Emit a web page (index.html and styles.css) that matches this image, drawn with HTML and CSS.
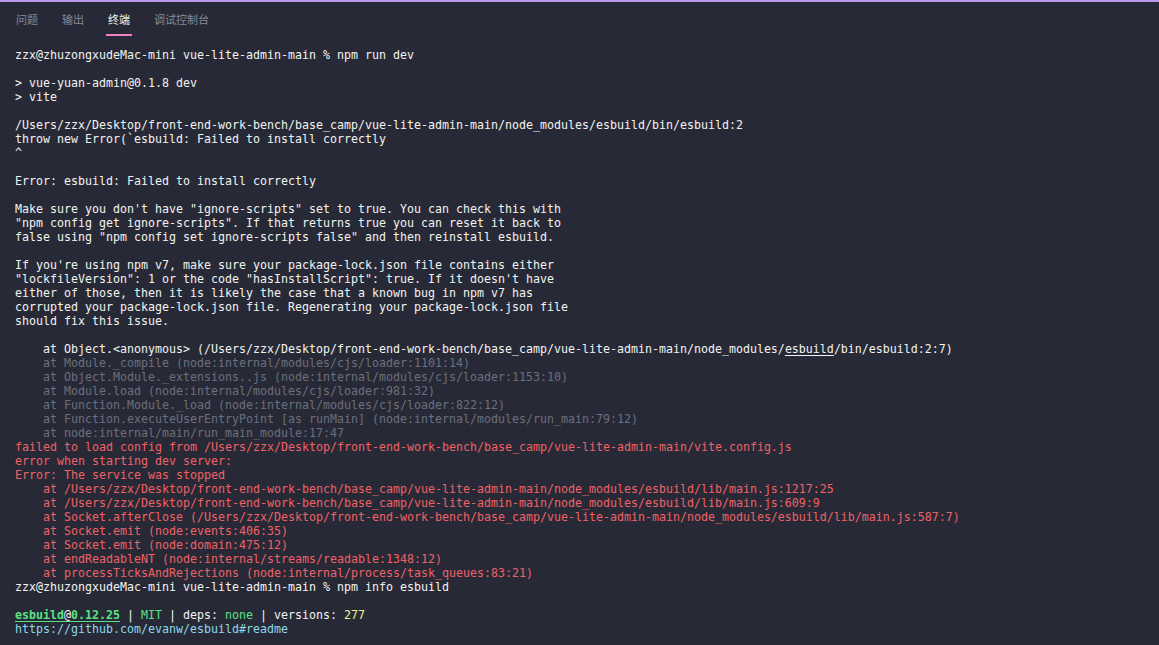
FILE: index.html
```html
<!DOCTYPE html>
<html lang="zh">
<head>
<meta charset="utf-8">
<title>终端</title>
<link rel="stylesheet" href="styles.css">
</head>
<body>
<div class="panel">
  <div class="tabs">
    <div class="tab">问题</div>
    <div class="tab">输出</div>
    <div class="tab active">终端</div>
    <div class="tab">调试控制台</div>
  </div>
  <pre class="term"><span>zzx@zhuzongxudeMac-mini vue-lite-admin-main % npm run dev</span>

<span>&gt; vue-yuan-admin@0.1.8 dev</span>
<span>&gt; vite</span>

<span>/Users/zzx/Desktop/front-end-work-bench/base_camp/vue-lite-admin-main/node_modules/esbuild/bin/esbuild:2</span>
<span>throw new Error(`esbuild: Failed to install correctly</span>
<span>^</span>

<span>Error: esbuild: Failed to install correctly</span>

<span>Make sure you don't have "ignore-scripts" set to true. You can check this with</span>
<span>"npm config get ignore-scripts". If that returns true you can reset it back to</span>
<span>false using "npm config set ignore-scripts false" and then reinstall esbuild.</span>

<span>If you're using npm v7, make sure your package-lock.json file contains either</span>
<span>"lockfileVersion": 1 or the code "hasInstallScript": true. If it doesn't have</span>
<span>either of those, then it is likely the case that a known bug in npm v7 has</span>
<span>corrupted your package-lock.json file. Regenerating your package-lock.json file</span>
<span>should fix this issue.</span>

<span>    at Object.&lt;anonymous&gt; (/Users/zzx/Desktop/front-end-work-bench/base_camp/vue-lite-admin-main/node_modules/<u>esbuild</u>/bin/esbuild:2:7)</span>
<span class="dim">    at Module._compile (node:internal/modules/cjs/loader:1101:14)</span>
<span class="dim">    at Object.Module._extensions..js (node:internal/modules/cjs/loader:1153:10)</span>
<span class="dim">    at Module.load (node:internal/modules/cjs/loader:981:32)</span>
<span class="dim">    at Function.Module._load (node:internal/modules/cjs/loader:822:12)</span>
<span class="dim">    at Function.executeUserEntryPoint [as runMain] (node:internal/modules/run_main:79:12)</span>
<span class="dim">    at node:internal/main/run_main_module:17:47</span>
<span class="red">failed to load config from /Users/zzx/Desktop/front-end-work-bench/base_camp/vue-lite-admin-main/vite.config.js</span>
<span class="red">error when starting dev server:</span>
<span class="red">Error: The service was stopped</span>
<span class="red">    at /Users/zzx/Desktop/front-end-work-bench/base_camp/vue-lite-admin-main/node_modules/esbuild/lib/main.js:1217:25</span>
<span class="red">    at /Users/zzx/Desktop/front-end-work-bench/base_camp/vue-lite-admin-main/node_modules/esbuild/lib/main.js:609:9</span>
<span class="red">    at Socket.afterClose (/Users/zzx/Desktop/front-end-work-bench/base_camp/vue-lite-admin-main/node_modules/esbuild/lib/main.js:587:7)</span>
<span class="red">    at Socket.emit (node:events:406:35)</span>
<span class="red">    at Socket.emit (node:domain:475:12)</span>
<span class="red">    at endReadableNT (node:internal/streams/readable:1348:12)</span>
<span class="red">    at processTicksAndRejections (node:internal/process/task_queues:83:21)</span>
<span>zzx@zhuzongxudeMac-mini vue-lite-admin-main % npm info esbuild</span>

<span><span class="pkg"><b class="green">esbuild</b>@<b class="green">0.12.25</b></span> | <span class="green">MIT</span> | deps: <span class="green">none</span> | versions: <span class="yellow">277</span></span>
<span class="cyan">https://github.com/evanw/esbuild#readme</span></pre>
</div>
</body>
</html>
```
FILE: styles.css
```css
html, body {
  margin: 0;
  padding: 0;
  background: #272a36;
  height: 100%;
  overflow: hidden;
}
.panel {
  border-top: 2px solid #bc9af0;
  height: 100%;
  box-sizing: border-box;
  background: #272a36;
}
.tabs {
  display: flex;
  gap: 20px;
  padding: 0 0 0 14px;
  height: 36px;
  font-family: "Noto Sans CJK SC", "Noto Sans", sans-serif;
  font-size: 11px;
}
.tab {
  color: #868996;
  padding: 0 2px;
  line-height: 34px;
  height: 34px;
  box-sizing: border-box;
  border-bottom: 2px solid transparent;
}
.tab.active {
  color: #f2f2f2;
  border-bottom-color: #f27fc4;
}
.term {
  margin: 0;
  padding: 10px 0 0 15px;
  font-family: "DejaVu Sans Mono", "Liberation Mono", monospace;
  font-size: 11.63px;
  line-height: 14px;
  color: #f3f3f1;
  white-space: pre;
}
.term b { font-weight: bold; }
.pkg {
  text-decoration: underline;
  text-decoration-color: #5ae185;
  text-underline-offset: 2px;
}
.term u {
  text-decoration: underline;
  text-underline-offset: 2px;
}
.dim { color: #6c6f7d; }
.red { color: #ef6166; }
.green { color: #5ae185; }
.yellow { color: #eef08a; }
.cyan { color: #8ed8ea; }
```
